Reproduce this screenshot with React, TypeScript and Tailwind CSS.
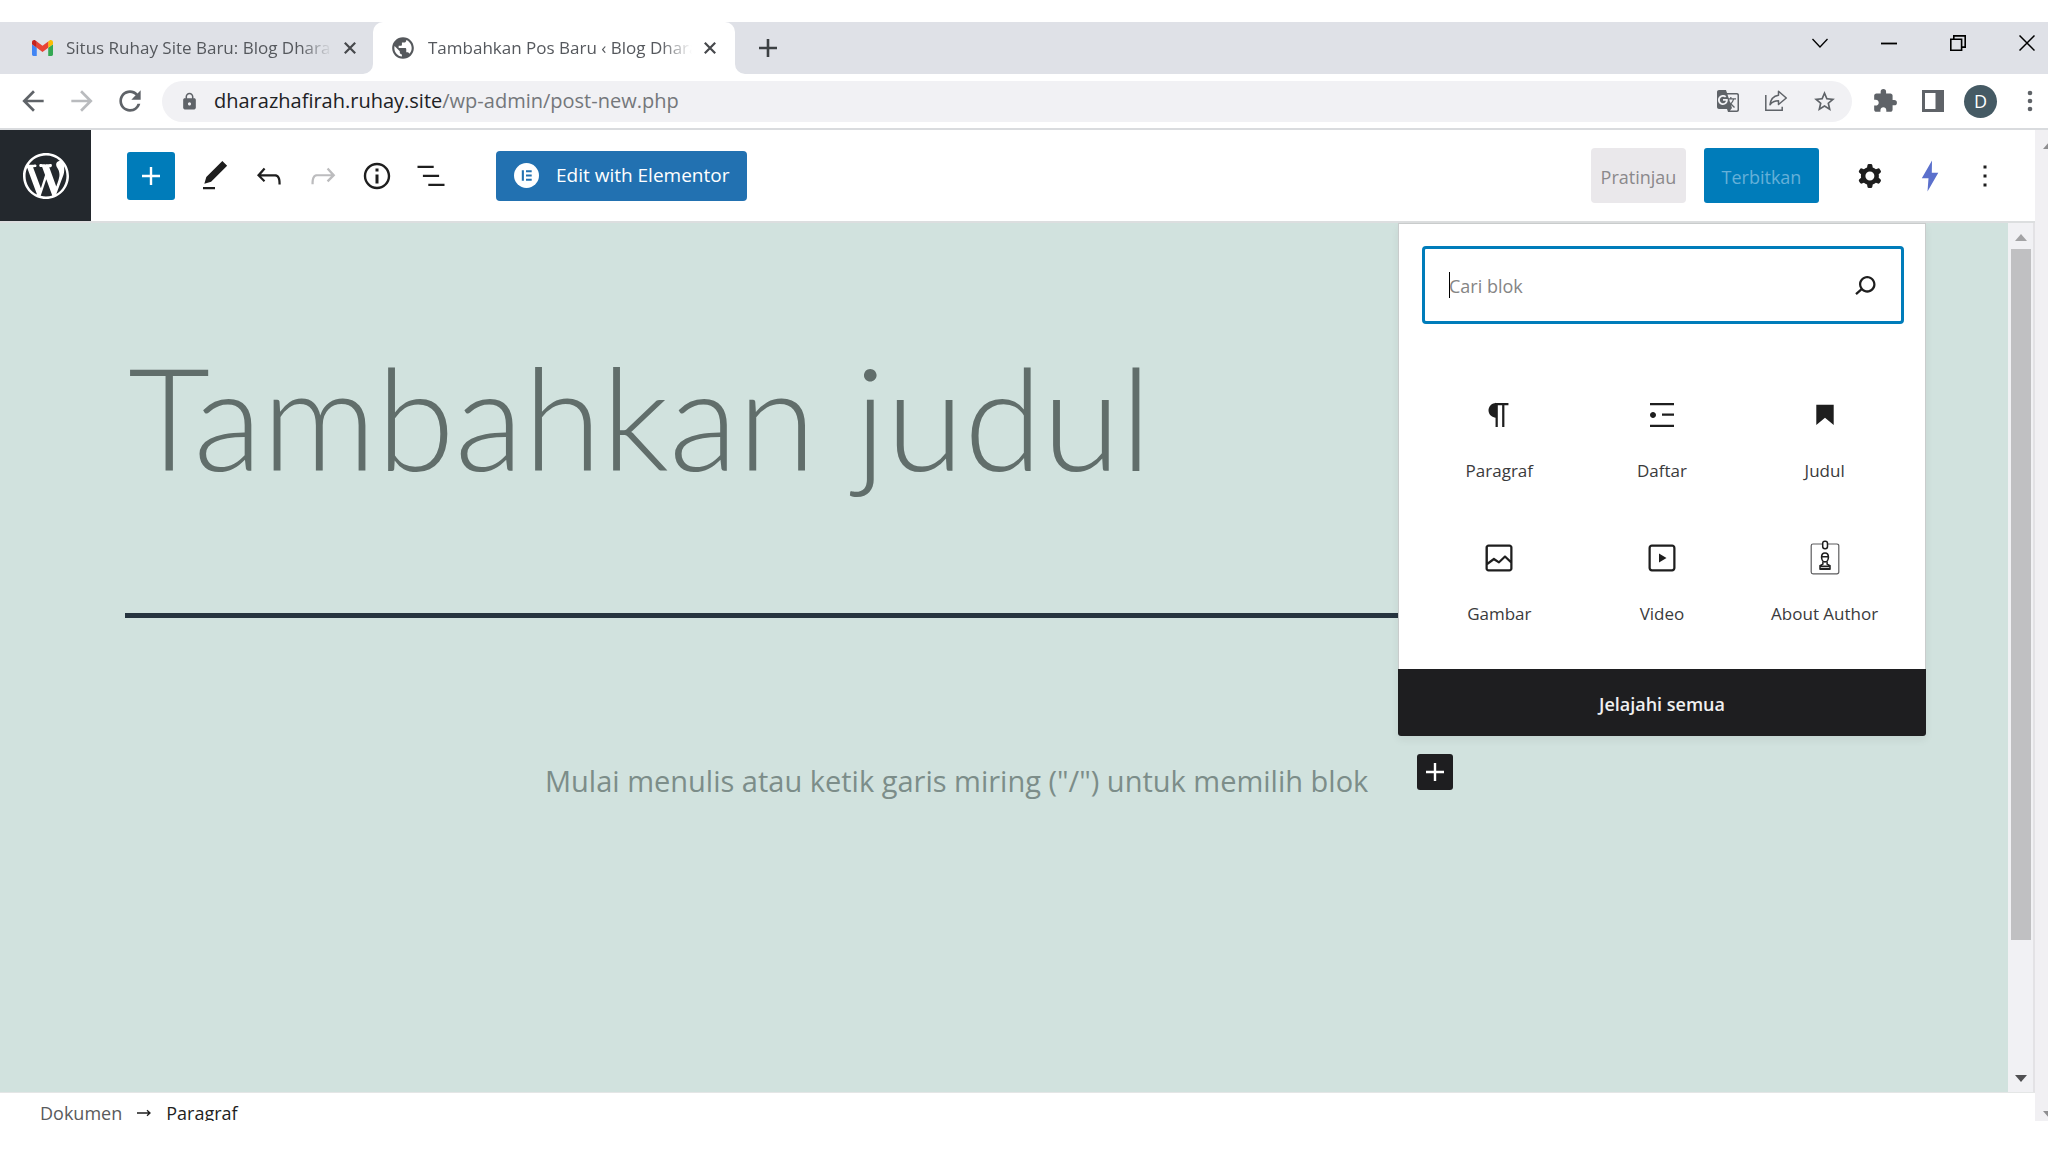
import React from "react";
import type { ReactNode } from "react";
import {
  MdArrowBack,
  MdArrowForward,
  MdExtension,
  MdGTranslate,
  MdLock,
  MdPublic,
  MdRefresh,
  MdStarBorder,
} from "react-icons/md";

const ICONS = {
  plus: "M18 11.2h-5.2V6h-1.6v5.2H6v1.6h5.2V18h1.6v-5.2H18z",
  pencil: "M20.1 5.1L16.9 2 6.2 12.7l-1.3 4.4 4.5-1.3L20.1 5.1zM4 20.8h8v-1.5H4v1.5z",
  undo: "M18.3 11.7c-.6-.6-1.4-.9-2.3-.9H6.7l2.9-3.3-1.1-1-4.5 5L8.5 16l1-1-2.7-2.7H16c.5 0 .9.2 1.3.5 1 1 1 3.4 1 4.5v.3h1.5v-.2c0-1.5 0-4.3-1.5-5.7z",
  redo: "M15.6 6.5l-1.1 1 2.9 3.3H8c-.9 0-1.7.3-2.3.9-1.4 1.5-1.4 4.2-1.4 5.6v.2h1.5v-.3c0-1.1 0-3.5 1-4.5.3-.3.7-.5 1.3-.5h9.2L14.5 15l1.1 1.1 4.6-4.6-4.6-5z",
  info: "M12 3.2c-4.8 0-8.8 3.9-8.8 8.8 0 4.8 3.9 8.8 8.8 8.8 4.8 0 8.8-3.9 8.8-8.8 0-4.8-4-8.8-8.8-8.8zm0 16c-4 0-7.2-3.3-7.2-7.2C4.8 8 8 4.8 12 4.8s7.2 3.3 7.2 7.2c0 4-3.2 7.2-7.2 7.2zM11 17h2v-6h-2v6zm0-8h2V7h-2v2z",
  listView: "M13.8 5.2H3v1.5h10.8V5.2zm-3.6 12v1.5H21v-1.5H10.2zm7.2-6H6.6v1.5h10.8v-1.5z",
  cog: "M10.289 4.836A1 1 0 0111.275 4h1.306a1 1 0 01.987.836l.244 1.466c.787.26 1.503.679 2.108 1.218l1.393-.522a1 1 0 011.216.437l.653 1.13a1 1 0 01-.23 1.273l-1.148.944a6.025 6.025 0 010 2.435l1.149.946a1 1 0 01.23 1.272l-.653 1.13a1 1 0 01-1.216.437l-1.394-.522c-.605.54-1.32.958-2.108 1.218l-.244 1.466a1 1 0 01-.987.836h-1.306a1 1 0 01-.986-.836l-.244-1.466a5.995 5.995 0 01-2.108-1.218l-1.394.522a1 1 0 01-1.217-.436l-.653-1.131a1 1 0 01.23-1.272l1.149-.946a6.026 6.026 0 010-2.435l-1.148-.944a1 1 0 01-.23-1.272l.653-1.131a1 1 0 011.217-.437l1.393.522a5.994 5.994 0 012.108-1.218l.244-1.466zM14.929 12a3 3 0 11-6 0 3 3 0 016 0z",
  more: "M13 19h-2v-2h2v2zm0-6h-2v-2h2v2zm0-6h-2V5h2v2z",
  search: "M13.5 6C10.5 6 8 8.5 8 11.5c0 1.1.3 2.1.9 3l-3.4 3 1 1.1 3.4-2.9c1 .9 2.2 1.4 3.6 1.4 3 0 5.5-2.5 5.5-5.5C19 8.5 16.5 6 13.5 6zm0 9.5c-2.2 0-4-1.8-4-4s1.8-4 4-4 4 1.8 4 4-1.8 4-4 4z",
  paragraph: "M18.3 4H9.9v-.1l-.9.2c-2.3.4-4 2.4-4 4.8s1.7 4.4 4 4.8l.7.1V20h1.5V5.5h2.9V20h1.5V5.5h2.7V4z",
  list: "M4 4v1.5h16V4H4zm8 8.5h8V11h-8v1.5zM4 20h16v-1.5H4V20zm4-8c0-1.1-.9-2-2-2s-2 .9-2 2 .9 2 2 2 2-.9 2-2z",
  heading: "M6.2 5.2v13.4l5.8-4.8 5.8 4.8V5.2z",
  image: "M19 3H5c-1.1 0-2 .9-2 2v14c0 1.1.9 2 2 2h14c1.1 0 2-.9 2-2V5c0-1.1-.9-2-2-2zM5 4.5h14c.3 0 .5.2.5.5v8.4l-3-2.9c-.3-.3-.8-.3-1 0L11.9 14 9 12c-.3-.2-.6-.2-.8 0l-3.6 2.6V5c-.1-.3.1-.5.4-.5zm14 15H5c-.3 0-.5-.2-.5-.5v-2.4l4.1-3 3 1.9c.3.2.7.2.9-.1L16 12l3.5 3.4V19c0 .3-.2.5-.5.5z",
  video: "M18.7 3H5.3C4 3 3 4 3 5.3v13.4C3 20 4 21 5.3 21h13.4c1.3 0 2.3-1 2.3-2.3V5.3C21 4 20 3 18.7 3zm.8 15.7c0 .4-.4.8-.8.8H5.3c-.4 0-.8-.4-.8-.8V5.3c0-.4.4-.8.8-.8h13.4c.4 0 .8.4.8.8v13.4zM10 15l5-3-5-3v6z",
};

function WpIcon({ name }: { name: keyof typeof ICONS }) {
  return (
    <svg viewBox="0 0 24 24" className="size-9 shrink-0" fill="currentColor" fillRule="evenodd" aria-hidden="true">
      <path d={ICONS[name]} />
    </svg>
  );
}

function AuthorIcon() {
  return (
    <svg viewBox="0 0 36 36" className="size-9 shrink-0" fill="none" stroke="currentColor" aria-hidden="true">
      <path d="M15.5 4H6a1.8 1.8 0 0 0-1.8 1.8V32A1.8 1.8 0 0 0 6 33.8h24a1.8 1.8 0 0 0 1.8-1.8V5.8A1.8 1.8 0 0 0 30 4h-9.5" strokeWidth="1.2" stroke="#5c5c5e" />
      <rect x="15.7" y="1.2" width="4.8" height="7.6" rx="2.2" strokeWidth="1.5" />
      <path d="M14.6 17.2c0-2.6 1.2-4.2 3.4-4.2s3.4 1.6 3.4 4.2c0 2.6-1.5 4.7-3.4 4.7s-3.4-2.1-3.4-4.7z" strokeWidth="1.6" />
      <path d="M14.6 16.8h6.8M15.9 21.5v2.6l-2.9 1.5v3h10v-3l-2.9-1.5v-2.6M13 26.3h10M12.5 29.2h11" strokeWidth="1.5" />
    </svg>
  );
}

function WordPressLogo() {
  return (
    <svg viewBox="0 0 20 20" className="size-[46px]" fill="currentColor" aria-hidden="true">
      <path d="M20 10c0-5.51-4.49-10-10-10C4.48 0 0 4.49 0 10c0 5.52 4.48 10 10 10 5.51 0 10-4.48 10-10zM7.78 15.37L4.37 6.22c.55-.02 1.17-.08 1.17-.08.5-.06.44-1.13-.06-1.11 0 0-1.45.11-2.37.11-.18 0-.37 0-.58-.01C4.12 2.69 6.87 1.11 10 1.11c2.33 0 4.45.87 6.05 2.34-.68-.11-1.65.39-1.65 1.58 0 .74.45 1.36.9 2.1.35.61.55 1.36.55 2.46 0 1.49-1.4 5-1.4 5l-3.03-8.37c.54-.02.82-.17.82-.17.5-.05.44-1.25-.06-1.22 0 0-1.44.12-2.38.12-.87 0-2.33-.12-2.33-.12-.5-.03-.56 1.2-.06 1.22l.92.08 1.26 3.41zM17.41 10c.24-.64.74-1.87.43-4.25.7 1.29 1.05 2.71 1.05 4.25 0 3.29-1.73 6.24-4.4 7.78.97-2.59 1.94-5.2 2.92-7.78zM6.1 18.09C3.12 16.65 1.11 13.53 1.11 10c0-1.3.23-2.48.72-3.59C3.25 10.3 4.67 14.2 6.1 18.09zm4.03-6.63l2.58 6.98c-.86.29-1.76.45-2.71.45-.79 0-1.57-.11-2.29-.33.81-2.38 1.62-4.74 2.42-7.1z" />
    </svg>
  );
}

function GmailIcon() {
  return (
    <svg viewBox="52 42 88 66" className="h-4 w-[21px] shrink-0" aria-hidden="true">
      <path fill="#4285f4" d="M58 108h14V74L52 59v43c0 3.32 2.69 6 6 6" />
      <path fill="#34a853" d="M120 108h14c3.32 0 6-2.69 6-6V59l-20 15" />
      <path fill="#fbbc04" d="M120 48v26l20-15v-8c0-7.42-8.47-11.65-14.4-7.2" />
      <path fill="#ea4335" d="M72 74V48l24 18 24-18v26L96 92" />
      <path fill="#c5221f" d="M52 51v8l20 15V48l-5.6-4.2c-5.94-4.45-14.4-.22-14.4 7.2" />
    </svg>
  );
}

function CloseIcon() {
  return (
    <svg viewBox="0 0 12 12" className="size-3" stroke="currentColor" strokeWidth="2.2" aria-hidden="true">
      <path d="M.8.8l10.4 10.4M11.2.8L.8 11.2" />
    </svg>
  );
}

/* Concave corner that joins the active tab to the toolbar below. */
function TabFoot({ className }: { className: string }) {
  return (
    <svg viewBox="0 0 10 10" className={className} fill="#ffffff" aria-hidden="true">
      <path d="M10 0v10H0A10 10 0 0 0 10 0z" />
    </svg>
  );
}

function BrowserTabs() {
  return (
    <div className="flex h-[52px] items-center bg-[#dfe1e7] text-[17px] text-[#55585d]">
      <div className="flex h-full w-[373px] shrink-0 items-center pr-[17px] pl-8">
        <GmailIcon />
        <span className="ml-[13px] flex-1 overflow-hidden whitespace-nowrap [mask-image:linear-gradient(to_right,black_88%,transparent)]">
          Situs Ruhay Site Baru: Blog Dhara
        </span>
        <button type="button" aria-label="Tutup tab" className="ml-3 text-[#46484c]">
          <CloseIcon />
        </button>
      </div>
      <div className="relative flex h-full w-[362px] shrink-0 items-center rounded-t-[10px] bg-white pr-[19px] pl-[17px]">
        <TabFoot className="absolute bottom-0 -left-2.5 size-2.5" />
        <TabFoot className="absolute -right-2.5 bottom-0 size-2.5 -scale-x-100" />
        <MdPublic className="size-[26px] shrink-0 text-[#55585c]" />
        <span className="ml-3 flex-1 overflow-hidden whitespace-nowrap [mask-image:linear-gradient(to_right,black_88%,transparent)]">
          Tambahkan Pos Baru ‹ Blog Dhara
        </span>
        <button type="button" aria-label="Tutup tab" className="ml-3 text-[#46484c]">
          <CloseIcon />
        </button>
      </div>
      <button type="button" aria-label="Tab baru" className="ml-6 text-[#3c4043]">
        <svg viewBox="0 0 18 18" className="size-[18px]" stroke="currentColor" strokeWidth="2.6" aria-hidden="true">
          <path d="M9 0v18M0 9h18" />
        </svg>
      </button>
      <div className="mb-2.5 ml-auto flex items-center gap-[53px] pr-[13px] text-black">
        <button type="button" aria-label="Cari tab">
          <svg viewBox="0 0 16 16" className="size-4" fill="none" stroke="currentColor" strokeWidth="1.3" aria-hidden="true">
            <path d="M.5 4L8 12l7.5-8" />
          </svg>
        </button>
        <button type="button" aria-label="Perkecil">
          <svg viewBox="0 0 16 16" className="size-4" stroke="currentColor" strokeWidth="1.8" aria-hidden="true">
            <path d="M0 8.500h16" />
          </svg>
        </button>
        <button type="button" aria-label="Pulihkan">
          <svg viewBox="0 0 16 16" className="size-4" fill="none" stroke="currentColor" strokeWidth="1.6" aria-hidden="true">
            <path d="M.8 4.2h10.8v11H.8zM3.8 4V.9h11.4v11.2h-3.4" />
          </svg>
        </button>
        <button type="button" aria-label="Tutup">
          <svg viewBox="0 0 16 16" className="size-4" stroke="currentColor" strokeWidth="1.5" aria-hidden="true">
            <path d="M.5.5l15 15M15.5.5l-15 15" />
          </svg>
        </button>
      </div>
    </div>
  );
}

function AddressBar() {
  return (
    <div className="flex h-14 items-center border-b-2 border-[#d9dbde] pr-[13px] pl-[17px] text-[#5f6368]">
      <button type="button" aria-label="Kembali">
        <MdArrowBack className="size-8" />
      </button>
      <button type="button" aria-label="Maju" className="ml-[17px] text-[#b9bbbe]">
        <MdArrowForward className="size-8" />
      </button>
      <button type="button" aria-label="Muat ulang" className="ml-4">
        <MdRefresh className="size-8" />
      </button>
      <div className="ml-4 flex h-[41px] flex-1 items-center rounded-full bg-[#f1f1f4] pr-[15px] pl-[18px]">
        <MdLock className="size-[19px] shrink-0" />
        <div role="textbox" aria-label="Bilah alamat" className="ml-[15px] flex-1 text-xl leading-7 whitespace-nowrap text-[#74777b]">
          <span className="text-[#202124]">dharazhafirah.ruhay.site</span>/wp-admin/post-new.php
        </div>
        <div className="flex items-center gap-6">
          <button type="button" aria-label="Terjemahkan">
            <MdGTranslate className="size-6" />
          </button>
          <button type="button" aria-label="Bagikan">
            <svg viewBox="0 0 24 24" className="size-6" fill="none" stroke="currentColor" strokeWidth="1.5" aria-hidden="true">
              <path d="M1.8 6v15.2h16.4v-3.5" />
              <path d="M14.5 6.2V2.3L22.3 9l-7.8 6.5v-3.8c-4 0-6.5 1.2-8.5 4.1.5-5 3.2-8.800 8.500-9.600z" strokeLinejoin="round" />
            </svg>
          </button>
          <button type="button" aria-label="Tandai halaman">
            <MdStarBorder className="size-[25px]" />
          </button>
        </div>
      </div>
      <div className="ml-5 flex items-center">
        <button type="button" aria-label="Ekstensi">
          <MdExtension className="size-[26px]" />
        </button>
        <button type="button" aria-label="Panel samping" className="ml-6">
          <svg viewBox="0 0 22 22" className="size-[22px]" fill="currentColor" fillRule="evenodd" aria-hidden="true">
            <path d="M0 0h22v22H0zM3 3v16h10.5V3z" />
          </svg>
        </button>
        <button type="button" aria-label="Profil" className="ml-5 flex size-[33px] items-center justify-center rounded-full bg-[#455a64] text-lg text-white">
          D
        </button>
        <button type="button" aria-label="Menu" className="ml-7">
          <svg viewBox="0 0 10 24" className="h-6 w-2.5" fill="currentColor" aria-hidden="true">
            <circle cx="5" cy="4" r="2.3" />
            <circle cx="5" cy="12" r="2.3" />
            <circle cx="5" cy="20" r="2.3" />
          </svg>
        </button>
      </div>
    </div>
  );
}

function ToolButton({ label, className, children }: { label: string; className: string; children: ReactNode }) {
  return (
    <button type="button" aria-label={label} className={`flex h-12 items-center justify-center rounded-[3px] ${className}`}>
      {children}
    </button>
  );
}

function EditorToolbar() {
  return (
    <header className="flex items-center border-b-2 border-[#dcdedf] bg-white text-[#1e1e1e]">
      <a href="#" aria-label="WordPress" className="flex h-[91px] w-[91px] items-center justify-center bg-[#23282d] text-white">
        <WordPressLogo />
      </a>
      <div className="ml-9 flex items-center">
        <ToolButton label="Tambah blok" className="w-12 bg-[#007cba] text-white">
          <WpIcon name="plus" />
        </ToolButton>
        <div className="ml-[13px] flex items-center">
          <ToolButton label="Sunting" className="w-[54px]"><WpIcon name="pencil" /></ToolButton>
          <ToolButton label="Batalkan" className="w-[54px]"><WpIcon name="undo" /></ToolButton>
          <ToolButton label="Ulangi" className="w-[54px] text-[#bcbcbe]"><WpIcon name="redo" /></ToolButton>
          <ToolButton label="Rincian" className="w-[54px]"><WpIcon name="info" /></ToolButton>
          <ToolButton label="Tampilan daftar" className="w-[54px]"><WpIcon name="listView" /></ToolButton>
        </div>
        <button type="button" className="ml-[38px] flex h-[50px] items-center gap-[17px] rounded bg-[#2271b1] px-[18px] text-[19px] text-white">
          <svg viewBox="0 0 25 25" className="size-[25px]" aria-hidden="true">
            <circle cx="12.5" cy="12.5" r="12.5" fill="#ffffff" />
            <path fill="#2271b1" d="M7.8 7.3h2.1v10.4H7.8zM12 7.3h5.7v2H12zM12 11.5h5.7v2H12zM12 15.7h5.7v2H12z" />
          </svg>
          Edit with Elementor
        </button>
      </div>
      <div className="ml-auto flex items-center text-lg">
        <button type="button" disabled className="flex h-[55px] w-[95px] items-center justify-center rounded bg-[#eae8eb] pt-0.5 text-[#8b898b]">
          Pratinjau
        </button>
        <button type="button" disabled className="ml-[18px] flex h-[55px] w-[115px] items-center justify-center rounded-[3px] bg-[#007cba] pt-0.5 text-[#65b0d8]">
          Terbitkan
        </button>
        <ToolButton label="Pengaturan" className="ml-[27px] w-12"><WpIcon name="cog" /></ToolButton>
        <ToolButton label="Aksi cepat" className="ml-3 w-12">
          <svg viewBox="0 0 18 32" className="h-8 w-[18px]" fill="#5b70cc" aria-hidden="true">
            <path d="M11 .5L.8 18.2h6.700L6.500 31.500 17.300 12.800h-6.500z" />
          </svg>
        </ToolButton>
        <ToolButton label="Opsi" className="mr-[26px] ml-[7px] w-12"><WpIcon name="more" /></ToolButton>
      </div>
    </header>
  );
}

const BLOCKS: { label: string; icon: ReactNode }[] = [
  { label: "Paragraf", icon: <WpIcon name="paragraph" /> },
  { label: "Daftar", icon: <WpIcon name="list" /> },
  { label: "Judul", icon: <WpIcon name="heading" /> },
  { label: "Gambar", icon: <WpIcon name="image" /> },
  { label: "Video", icon: <WpIcon name="video" /> },
  { label: "About Author", icon: <AuthorIcon /> },
];

function BlockInserter() {
  return (
    <div className="absolute top-0 right-[82px] w-[528px] text-[#1e1e1e] shadow-[0_4px_8px_rgba(0,0,0,0.06)]">
      <div className="border-x border-t border-[#c9cccc] bg-white px-[19px] pt-[22px] pb-[11px]">
        <div className="relative mr-0.5 ml-1">
          <input
            type="search"
            aria-label="Cari blok"
            placeholder="Cari blok"
            className="h-[78px] w-full rounded border-[3px] border-[#007cba] bg-white pt-0.5 pr-14 pl-6 text-lg outline-none placeholder:text-[#858585]"
          />
          <span className="absolute top-[26px] left-[27px] h-[26px] w-px bg-black" />
          <span className="absolute top-[21px] right-[21px]">
            <WpIcon name="search" />
          </span>
        </div>
        <div className="mt-12 grid grid-cols-3">
          {BLOCKS.map((block) => (
            <button key={block.label} type="button" className="flex h-[143px] flex-col items-center pt-[25px] text-[17px] leading-6">
              {block.icon}
              <span className="mt-[26px] text-[#3a3a3c]">{block.label}</span>
            </button>
          ))}
        </div>
      </div>
      <button type="button" className="flex h-[67px] w-full items-center justify-center rounded-b-[3px] bg-[#1e1e20] pt-0.5 text-lg font-semibold text-[#f0f0f0]">
        Jelajahi semua
      </button>
    </div>
  );
}

function Arrow({ className }: { className: string }) {
  return (
    <svg viewBox="0 0 12 7" className={className} fill="currentColor" aria-hidden="true">
      <path d="M0 7L6 0l6 7z" />
    </svg>
  );
}

function EditorCanvas() {
  return (
    <div className="flex flex-1">
      <main className="relative flex-1 bg-[#d1e2de] px-[125px] pt-[109px]">
        <h1 role="textbox" className="border-b-[5px] border-[#26343f] pb-[113px] pl-[3px] font-['Lato'] text-[142px] leading-[168px] font-light text-[#616e6b]">
          Tambahkan judul
        </h1>
        <div className="mx-auto mt-[136px] flex max-w-[918px] items-start justify-between pr-2.5">
          <p role="textbox" className="pt-[7px] text-[29px] leading-10 whitespace-nowrap text-[#7c8d89]">
            Mulai menulis atau ketik garis miring ("/") untuk memilih blok
          </p>
          <button type="button" aria-label="Tambahkan blok" className="flex size-9 items-center justify-center rounded-[3px] bg-[#1e1e20] text-white">
            <WpIcon name="plus" />
          </button>
        </div>
        <BlockInserter />
      </main>
      <div className="flex w-[27px] flex-col items-center border-r-2 border-[#e3e2e5] bg-[#f1f1f4] pt-[11px] pb-2.5">
        <Arrow className="h-[7px] w-3 text-[#a3a3a5]" />
        <div className="mt-2 h-[691px] w-5 bg-[#c0c0c2]" />
        <Arrow className="mt-auto h-[7px] w-3 rotate-180 text-[#505052]" />
      </div>
    </div>
  );
}

export default function App() {
  return (
    <div className="flex min-h-screen flex-col bg-white pt-[22px] pb-[31px] font-['Open_Sans',sans-serif]">
      <BrowserTabs />
      <AddressBar />
      <div className="flex flex-1">
        <div className="flex flex-1 flex-col">
          <EditorToolbar />
          <EditorCanvas />
          <footer className="h-[29px] overflow-hidden border-t border-[#e4e6e6] pl-10 text-lg leading-10 text-[#1e1e1e]">
            <nav aria-label="Jejak blok" className="flex">
              <a href="#" className="text-[#5a5a5c]">Dokumen</a>
              <svg viewBox="0 0 14 8" className="mx-[15px] mt-4 h-2 w-3.5 shrink-0" fill="none" stroke="currentColor" strokeWidth="1.3" aria-hidden="true">
                <path d="M0 4h13M10 1.300L13 4l-3 2.700" />
              </svg>
              <a href="#">Paragraf</a>
            </nav>
          </footer>
        </div>
        <div className="flex w-[13px] flex-col items-end justify-between overflow-hidden bg-[#f1f0f3] pt-3 pb-[3px] text-[#8e8e90]">
          <Arrow className="-mr-[7px] h-[7px] w-3" />
          <Arrow className="-mr-[7px] h-[7px] w-3 rotate-180" />
        </div>
      </div>
    </div>
  );
}
